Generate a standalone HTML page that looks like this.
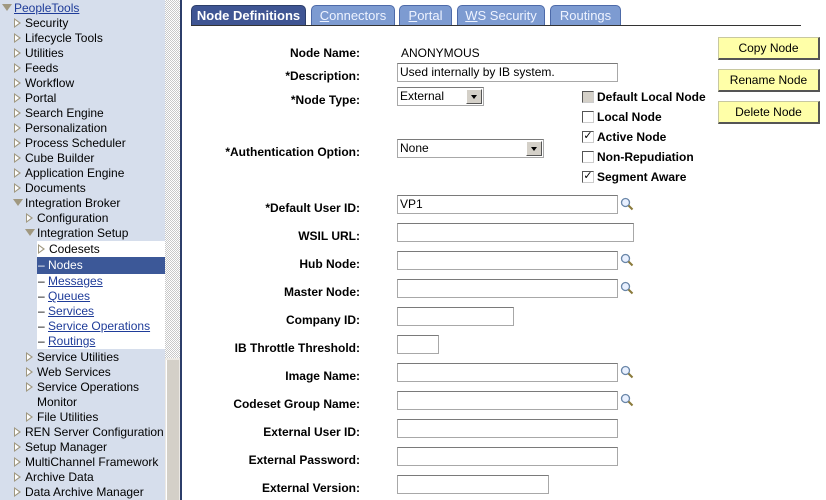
<!DOCTYPE html>
<html><head><style>
*{margin:0;padding:0;box-sizing:border-box}
body{width:826px;height:500px;overflow:hidden;background:#fff;font-family:"Liberation Sans",Arial,sans-serif;font-size:12px;position:relative}
.a{position:absolute;white-space:nowrap}
#side{position:absolute;left:0;top:0;width:165px;height:500px;background:#d6deec}
#scr{position:absolute;left:165px;top:0;width:16px;height:358px;background-image:repeating-conic-gradient(#c8c8c8 0 25%,#fff 0 50%);background-size:2px 2px}
#scr2{position:absolute;left:165px;top:358px;width:16px;height:142px;background:#ece9e4}
#thumb{position:absolute;left:166px;top:360px;width:13px;height:140px;background:#d4d0c8;border-left:1px solid #fff}
#bar{position:absolute;left:180px;top:0;width:2px;height:500px;background:#2c3e6a}
.n{position:absolute;font-size:12px;color:#000;height:15px;line-height:15px}
.tri{display:inline-block;width:0;height:0;border-top:5px solid transparent;border-bottom:5px solid transparent;border-left:7px solid #a09880;margin-right:4px;vertical-align:-1px;position:relative}
.tri::after{content:"";position:absolute;left:-6px;top:-3px;border-top:3px solid transparent;border-bottom:3px solid transparent;border-left:4px solid #fff}
.dn{display:inline-block;width:0;height:0;border-left:5px solid transparent;border-right:5px solid transparent;border-top:7px solid #a09880;margin-right:2px;vertical-align:1px}
.lnk{color:#1f3c99;text-decoration:underline}
.tab{position:absolute;top:5px;height:20px;border-radius:5px 5px 0 0;background:#7d9bd1;color:#eef3ff;font-size:13px;line-height:20px;text-align:center;border:1px solid #4d6aa8;border-bottom:none}
.lbl{position:absolute;right:466px;font-weight:bold;font-size:12px;white-space:nowrap}
.in{position:absolute;height:19px;border:1px solid #a8a8a8;border-top-color:#7a7a7a;background:#fff;font-size:12px;line-height:17px;padding-left:2px}
.btn{position:absolute;left:718px;width:102px;height:23px;background:#ffffa8;border:1px solid #c8c8a0;border-right:2px solid #555;border-bottom:2px solid #555;text-align:center;line-height:20px;font-size:12px}
.cb{position:absolute;left:582px;width:12px;height:12px;border:1px solid #555;border-right-color:#ccc;border-bottom-color:#ccc;background:#fff;font-size:11px;line-height:9px;text-align:center}
.cl{position:absolute;left:597px;font-weight:bold;font-size:12px}
.sel{position:absolute;width:16px;height:15px;top:1px;right:1px;background:#d4d0c8;border:1px solid;border-color:#fff #555 #555 #fff}
.sel::after{content:"";position:absolute;left:4px;top:5px;border-left:3px solid transparent;border-right:3px solid transparent;border-top:4px solid #000}
</style></head><body>
<div id="side"></div>
<div style="position:absolute;left:37px;top:241px;width:128px;height:108px;background:#fff"></div>
<div style="position:absolute;left:37px;top:257px;width:128px;height:17px;background:#3c5898"></div>
<div id="scr"></div><div id="scr2"></div><div id="thumb"></div><div id="bar"></div>

<div class="n" style="left:2px;top:1px"><span class="dn" style="margin-right:2px"></span><span class="lnk">PeopleTools</span></div>
<div class="n" style="left:14px;top:16px"><span class="tri"></span>Security</div>
<div class="n" style="left:14px;top:31px"><span class="tri"></span>Lifecycle Tools</div>
<div class="n" style="left:14px;top:46px"><span class="tri"></span>Utilities</div>
<div class="n" style="left:14px;top:61px"><span class="tri"></span>Feeds</div>
<div class="n" style="left:14px;top:76px"><span class="tri"></span>Workflow</div>
<div class="n" style="left:14px;top:91px"><span class="tri"></span>Portal</div>
<div class="n" style="left:14px;top:106px"><span class="tri"></span>Search Engine</div>
<div class="n" style="left:14px;top:121px"><span class="tri"></span>Personalization</div>
<div class="n" style="left:14px;top:136px"><span class="tri"></span>Process Scheduler</div>
<div class="n" style="left:14px;top:151px"><span class="tri"></span>Cube Builder</div>
<div class="n" style="left:14px;top:166px"><span class="tri"></span>Application Engine</div>
<div class="n" style="left:14px;top:181px"><span class="tri"></span>Documents</div>
<div class="n" style="left:13px;top:196px"><span class="dn"></span>Integration Broker</div>
<div class="n" style="left:26px;top:211px"><span class="tri"></span>Configuration</div>
<div class="n" style="left:25px;top:226px"><span class="dn"></span>Integration Setup</div>
<div class="n" style="left:38px;top:242px"><span class="tri"></span>Codesets</div>
<div class="n" style="left:38px;top:258px;color:#fff">– Nodes</div>
<div class="n" style="left:38px;top:274px">– <span class="lnk">Messages</span></div>
<div class="n" style="left:38px;top:289px">– <span class="lnk">Queues</span></div>
<div class="n" style="left:38px;top:304px">– <span class="lnk">Services</span></div>
<div class="n" style="left:38px;top:319px">– <span class="lnk">Service Operations</span></div>
<div class="n" style="left:38px;top:334px">– <span class="lnk">Routings</span></div>
<div class="n" style="left:26px;top:350px"><span class="tri"></span>Service Utilities</div>
<div class="n" style="left:26px;top:365px"><span class="tri"></span>Web Services</div>
<div class="n" style="left:26px;top:380px"><span class="tri"></span>Service Operations</div>
<div class="n" style="left:37px;top:395px">Monitor</div>
<div class="n" style="left:26px;top:410px"><span class="tri"></span>File Utilities</div>
<div class="n" style="left:14px;top:425px"><span class="tri"></span>REN Server Configuration</div>
<div class="n" style="left:14px;top:440px"><span class="tri"></span>Setup Manager</div>
<div class="n" style="left:14px;top:455px"><span class="tri"></span>MultiChannel Framework</div>
<div class="n" style="left:14px;top:470px"><span class="tri"></span>Archive Data</div>
<div class="n" style="left:14px;top:485px"><span class="tri"></span>Data Archive Manager</div>

<div class="tab" style="left:191px;width:115px;background:#3f5593;color:#fff;font-weight:bold;border-color:#2c3e6a">Node Definitions</div>
<div class="tab" style="left:311px;width:84px"><u>C</u>onnectors</div>
<div class="tab" style="left:399px;width:53px"><u>P</u>ortal</div>
<div class="tab" style="left:457px;width:88px"><u>W</u>S Security</div>
<div class="tab" style="left:550px;width:71px">Routings</div>
<div style="position:absolute;left:191px;top:25px;width:610px;height:1px;background:#333"></div>

<div class="lbl" style="top:46px">Node Name:</div><div class="a" style="left:401px;top:46px">ANONYMOUS</div>
<div class="lbl" style="top:69px">*Description:</div><div class="in" style="left:397px;top:63px;width:221px">Used internally by IB system.</div>
<div class="lbl" style="top:93px">*Node Type:</div><div class="in" style="left:397px;top:87px;width:87px">External<div class="sel"></div></div>
<div class="lbl" style="top:145px">*Authentication Option:</div><div class="in" style="left:397px;top:139px;width:147px">None<div class="sel"></div></div>

<div class="cb" style="top:91px;background:#d4d0c8"></div><div class="cl" style="top:90px">Default Local Node</div>
<div class="cb" style="top:111px"></div><div class="cl" style="top:110px">Local Node</div>
<div class="cb" style="top:131px">✓</div><div class="cl" style="top:130px">Active Node</div>
<div class="cb" style="top:151px"></div><div class="cl" style="top:150px">Non-Repudiation</div>
<div class="cb" style="top:171px">✓</div><div class="cl" style="top:170px">Segment Aware</div>

<div class="btn" style="top:37px">Copy Node</div>
<div class="btn" style="top:69px">Rename Node</div>
<div class="btn" style="top:101px">Delete Node</div>

<div class="lbl" style="top:201px">*Default User ID:</div><div class="in" style="left:397px;top:195px;width:221px">VP1</div>
<div class="lbl" style="top:229px">WSIL URL:</div><div class="in" style="left:397px;top:223px;width:237px"></div>
<div class="lbl" style="top:257px">Hub Node:</div><div class="in" style="left:397px;top:251px;width:221px"></div>
<div class="lbl" style="top:285px">Master Node:</div><div class="in" style="left:397px;top:279px;width:221px"></div>
<div class="lbl" style="top:313px">Company ID:</div><div class="in" style="left:397px;top:307px;width:117px"></div>
<div class="lbl" style="top:341px">IB Throttle Threshold:</div><div class="in" style="left:397px;top:335px;width:42px"></div>
<div class="lbl" style="top:369px">Image Name:</div><div class="in" style="left:397px;top:363px;width:221px"></div>
<div class="lbl" style="top:397px">Codeset Group Name:</div><div class="in" style="left:397px;top:391px;width:221px"></div>
<div class="lbl" style="top:425px">External User ID:</div><div class="in" style="left:397px;top:419px;width:221px"></div>
<div class="lbl" style="top:453px">External Password:</div><div class="in" style="left:397px;top:447px;width:221px"></div>
<div class="lbl" style="top:481px">External Version:</div><div class="in" style="left:397px;top:475px;width:152px"></div>

<svg style="position:absolute;left:0;top:0" width="826" height="500">
<defs><g id="l"><circle cx="5.5" cy="5.5" r="4" fill="#e8f0ff" stroke="#6a86a8" stroke-width="1.3"/><line x1="8.5" y1="8.5" x2="12.5" y2="12.5" stroke="#8a7a3a" stroke-width="2"/></g></defs>
<use href="#l" x="620" y="197"/><use href="#l" x="620" y="253"/><use href="#l" x="620" y="281"/><use href="#l" x="620" y="365"/><use href="#l" x="620" y="393"/>
</svg>
</body></html>
